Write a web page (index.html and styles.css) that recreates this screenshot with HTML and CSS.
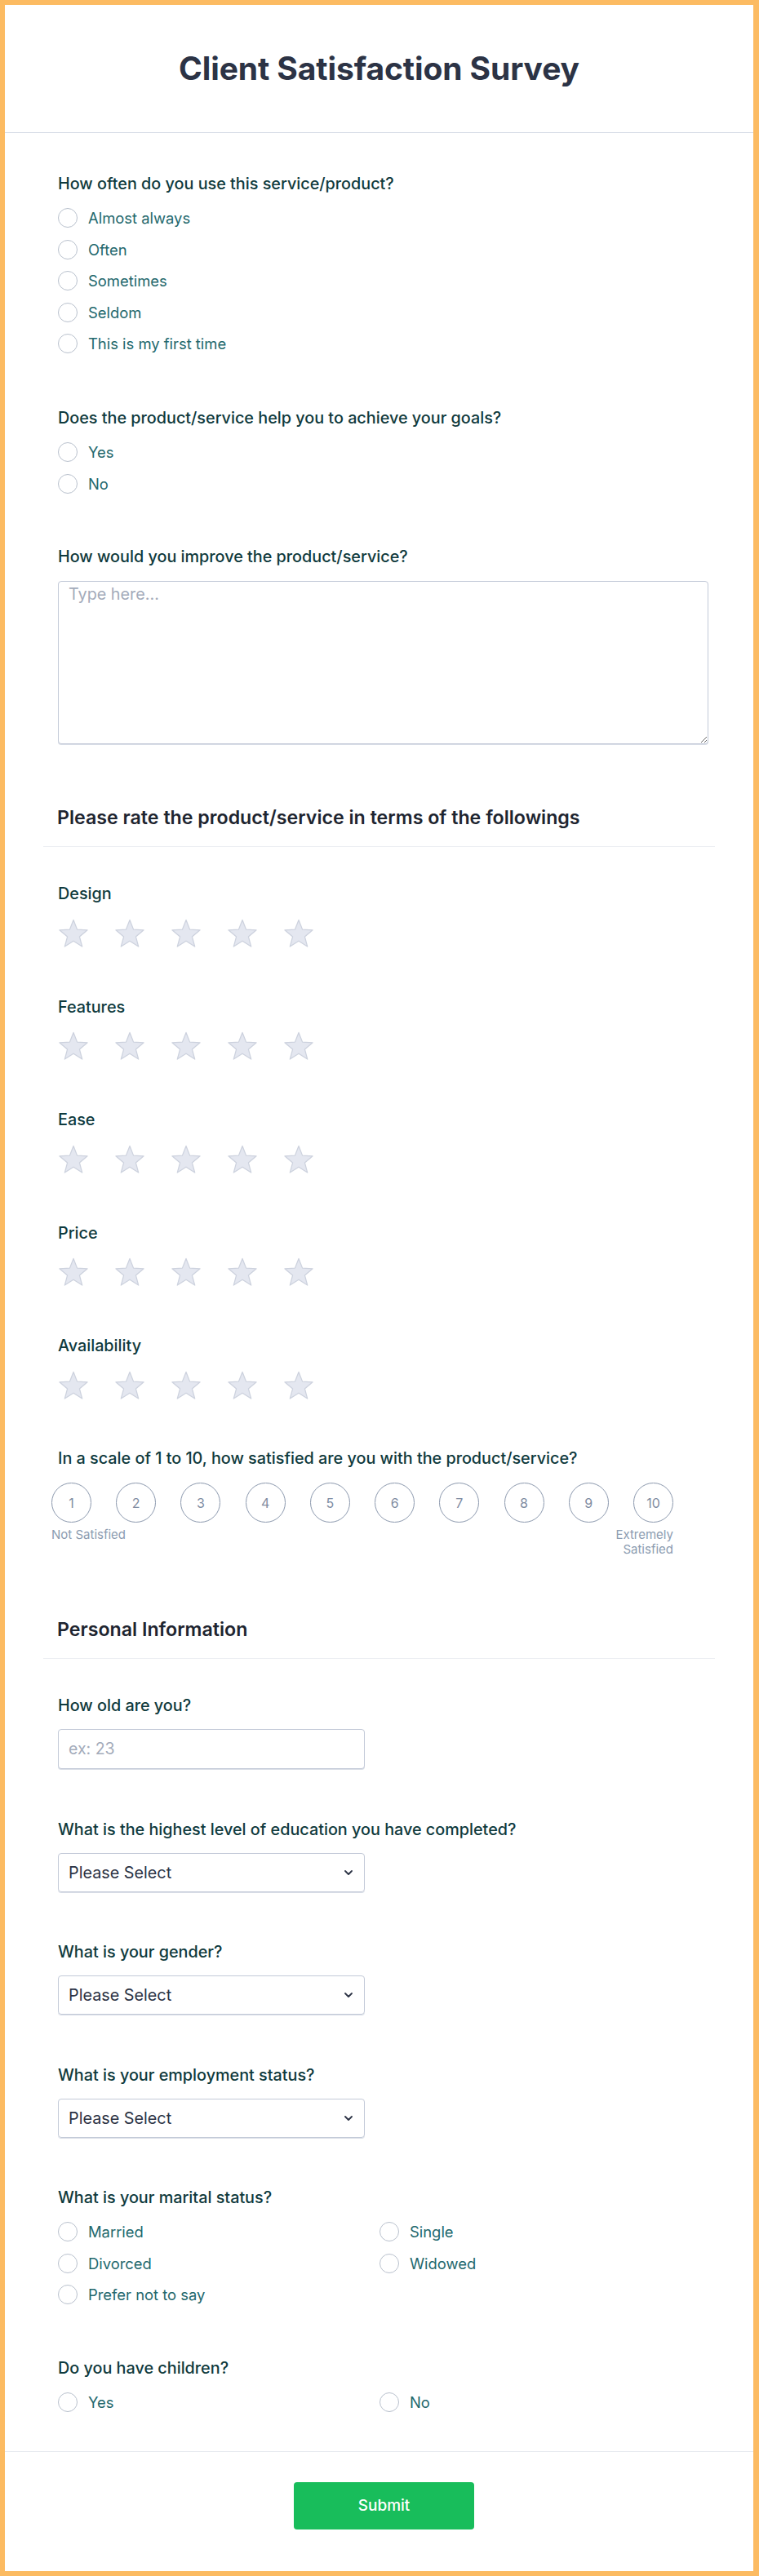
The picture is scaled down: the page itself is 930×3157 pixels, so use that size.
FILE: index.html
```html
<!DOCTYPE html>
<html lang="en">
<head>
<meta charset="utf-8">
<title>Client Satisfaction Survey</title>
<link rel="stylesheet" href="styles.css">
</head>
<body>
<div class="page">
  <header class="head"><h1 class="title">Client Satisfaction Survey</h1></header>
  <main class="body">
    <div class="q q1">
      <div class="label">How often do you use this service/product?</div>
      <div class="opts">
        <div class="opt"><span class="radio"></span>Almost always</div>
        <div class="opt"><span class="radio"></span>Often</div>
        <div class="opt"><span class="radio"></span>Sometimes</div>
        <div class="opt"><span class="radio"></span>Seldom</div>
        <div class="opt"><span class="radio"></span>This is my first time</div>
      </div>
    </div>
    <div class="q q2">
      <div class="label">Does the product/service help you to achieve your goals?</div>
      <div class="opts">
        <div class="opt"><span class="radio"></span>Yes</div>
        <div class="opt"><span class="radio"></span>No</div>
      </div>
    </div>
    <div class="q q3">
      <div class="label">How would you improve the product/service?</div>
      <textarea class="textarea" placeholder="Type here..."></textarea>
    </div>

    <div class="section s1">Please rate the product/service in terms of the followings</div>

    <div class="q rate r-first">
      <div class="label">Design</div>
      <div class="stars">
        <svg class="star" viewBox="0 0 39 37"><path d="M19.5 1.5L24.2 13.5 37.1 14.2 27.1 22.5 30.5 35 19.5 28 8.5 35 11.9 22.5 1.9 14.2 14.8 13.5Z"/></svg>
        <svg class="star" viewBox="0 0 39 37"><path d="M19.5 1.5L24.2 13.5 37.1 14.2 27.1 22.5 30.5 35 19.5 28 8.5 35 11.9 22.5 1.9 14.2 14.8 13.5Z"/></svg>
        <svg class="star" viewBox="0 0 39 37"><path d="M19.5 1.5L24.2 13.5 37.1 14.2 27.1 22.5 30.5 35 19.5 28 8.5 35 11.9 22.5 1.9 14.2 14.8 13.5Z"/></svg>
        <svg class="star" viewBox="0 0 39 37"><path d="M19.5 1.5L24.2 13.5 37.1 14.2 27.1 22.5 30.5 35 19.5 28 8.5 35 11.9 22.5 1.9 14.2 14.8 13.5Z"/></svg>
        <svg class="star" viewBox="0 0 39 37"><path d="M19.5 1.5L24.2 13.5 37.1 14.2 27.1 22.5 30.5 35 19.5 28 8.5 35 11.9 22.5 1.9 14.2 14.8 13.5Z"/></svg>
      </div>
    </div>
    <div class="q rate">
      <div class="label">Features</div>
      <div class="stars">
        <svg class="star" viewBox="0 0 39 37"><path d="M19.5 1.5L24.2 13.5 37.1 14.2 27.1 22.5 30.5 35 19.5 28 8.5 35 11.9 22.5 1.9 14.2 14.8 13.5Z"/></svg>
        <svg class="star" viewBox="0 0 39 37"><path d="M19.5 1.5L24.2 13.5 37.1 14.2 27.1 22.5 30.5 35 19.5 28 8.5 35 11.9 22.5 1.9 14.2 14.8 13.5Z"/></svg>
        <svg class="star" viewBox="0 0 39 37"><path d="M19.5 1.5L24.2 13.5 37.1 14.2 27.1 22.5 30.5 35 19.5 28 8.5 35 11.9 22.5 1.9 14.2 14.8 13.5Z"/></svg>
        <svg class="star" viewBox="0 0 39 37"><path d="M19.5 1.5L24.2 13.5 37.1 14.2 27.1 22.5 30.5 35 19.5 28 8.5 35 11.9 22.5 1.9 14.2 14.8 13.5Z"/></svg>
        <svg class="star" viewBox="0 0 39 37"><path d="M19.5 1.5L24.2 13.5 37.1 14.2 27.1 22.5 30.5 35 19.5 28 8.5 35 11.9 22.5 1.9 14.2 14.8 13.5Z"/></svg>
      </div>
    </div>
    <div class="q rate">
      <div class="label">Ease</div>
      <div class="stars">
        <svg class="star" viewBox="0 0 39 37"><path d="M19.5 1.5L24.2 13.5 37.1 14.2 27.1 22.5 30.5 35 19.5 28 8.5 35 11.9 22.5 1.9 14.2 14.8 13.5Z"/></svg>
        <svg class="star" viewBox="0 0 39 37"><path d="M19.5 1.5L24.2 13.5 37.1 14.2 27.1 22.5 30.5 35 19.5 28 8.5 35 11.9 22.5 1.9 14.2 14.8 13.5Z"/></svg>
        <svg class="star" viewBox="0 0 39 37"><path d="M19.5 1.5L24.2 13.5 37.1 14.2 27.1 22.5 30.5 35 19.5 28 8.5 35 11.9 22.5 1.9 14.2 14.8 13.5Z"/></svg>
        <svg class="star" viewBox="0 0 39 37"><path d="M19.5 1.5L24.2 13.5 37.1 14.2 27.1 22.5 30.5 35 19.5 28 8.5 35 11.9 22.5 1.9 14.2 14.8 13.5Z"/></svg>
        <svg class="star" viewBox="0 0 39 37"><path d="M19.5 1.5L24.2 13.5 37.1 14.2 27.1 22.5 30.5 35 19.5 28 8.5 35 11.9 22.5 1.9 14.2 14.8 13.5Z"/></svg>
      </div>
    </div>
    <div class="q rate">
      <div class="label">Price</div>
      <div class="stars">
        <svg class="star" viewBox="0 0 39 37"><path d="M19.5 1.5L24.2 13.5 37.1 14.2 27.1 22.5 30.5 35 19.5 28 8.5 35 11.9 22.5 1.9 14.2 14.8 13.5Z"/></svg>
        <svg class="star" viewBox="0 0 39 37"><path d="M19.5 1.5L24.2 13.5 37.1 14.2 27.1 22.5 30.5 35 19.5 28 8.5 35 11.9 22.5 1.9 14.2 14.8 13.5Z"/></svg>
        <svg class="star" viewBox="0 0 39 37"><path d="M19.5 1.5L24.2 13.5 37.1 14.2 27.1 22.5 30.5 35 19.5 28 8.5 35 11.9 22.5 1.9 14.2 14.8 13.5Z"/></svg>
        <svg class="star" viewBox="0 0 39 37"><path d="M19.5 1.5L24.2 13.5 37.1 14.2 27.1 22.5 30.5 35 19.5 28 8.5 35 11.9 22.5 1.9 14.2 14.8 13.5Z"/></svg>
        <svg class="star" viewBox="0 0 39 37"><path d="M19.5 1.5L24.2 13.5 37.1 14.2 27.1 22.5 30.5 35 19.5 28 8.5 35 11.9 22.5 1.9 14.2 14.8 13.5Z"/></svg>
      </div>
    </div>
    <div class="q rate">
      <div class="label">Availability</div>
      <div class="stars">
        <svg class="star" viewBox="0 0 39 37"><path d="M19.5 1.5L24.2 13.5 37.1 14.2 27.1 22.5 30.5 35 19.5 28 8.5 35 11.9 22.5 1.9 14.2 14.8 13.5Z"/></svg>
        <svg class="star" viewBox="0 0 39 37"><path d="M19.5 1.5L24.2 13.5 37.1 14.2 27.1 22.5 30.5 35 19.5 28 8.5 35 11.9 22.5 1.9 14.2 14.8 13.5Z"/></svg>
        <svg class="star" viewBox="0 0 39 37"><path d="M19.5 1.5L24.2 13.5 37.1 14.2 27.1 22.5 30.5 35 19.5 28 8.5 35 11.9 22.5 1.9 14.2 14.8 13.5Z"/></svg>
        <svg class="star" viewBox="0 0 39 37"><path d="M19.5 1.5L24.2 13.5 37.1 14.2 27.1 22.5 30.5 35 19.5 28 8.5 35 11.9 22.5 1.9 14.2 14.8 13.5Z"/></svg>
        <svg class="star" viewBox="0 0 39 37"><path d="M19.5 1.5L24.2 13.5 37.1 14.2 27.1 22.5 30.5 35 19.5 28 8.5 35 11.9 22.5 1.9 14.2 14.8 13.5Z"/></svg>
      </div>
    </div>

    <div class="q scale-q">
      <div class="label">In a scale of 1 to 10, how satisfied are you with the product/service?</div>
      <div class="scale">
        <div class="nums">
          <span class="num">1</span><span class="num">2</span><span class="num">3</span><span class="num">4</span><span class="num">5</span>
          <span class="num">6</span><span class="num">7</span><span class="num">8</span><span class="num">9</span><span class="num">10</span>
        </div>
        <div class="scale-labels">
          <span class="sl-left">Not Satisfied</span>
          <span class="sl-right">Extremely<br>Satisfied</span>
        </div>
      </div>
    </div>

    <div class="section s2">Personal Information</div>

    <div class="q age">
      <div class="label">How old are you?</div>
      <input class="input" type="text" placeholder="ex: 23">
    </div>
    <div class="q sel-q sel-first">
      <div class="label">What is the highest level of education you have completed?</div>
      <div class="select"><span>Please Select</span><svg class="chev" viewBox="0 0 10 6"><path d="M1 1l4 4 4-4"/></svg></div>
    </div>
    <div class="q sel-q">
      <div class="label">What is your gender?</div>
      <div class="select"><span>Please Select</span><svg class="chev" viewBox="0 0 10 6"><path d="M1 1l4 4 4-4"/></svg></div>
    </div>
    <div class="q sel-q">
      <div class="label">What is your employment status?</div>
      <div class="select"><span>Please Select</span><svg class="chev" viewBox="0 0 10 6"><path d="M1 1l4 4 4-4"/></svg></div>
    </div>
    <div class="q marital">
      <div class="label">What is your marital status?</div>
      <div class="opts two">
        <div class="opt"><span class="radio"></span>Married</div>
        <div class="opt"><span class="radio"></span>Single</div>
        <div class="opt"><span class="radio"></span>Divorced</div>
        <div class="opt"><span class="radio"></span>Widowed</div>
        <div class="opt"><span class="radio"></span>Prefer not to say</div>
      </div>
    </div>
    <div class="q children">
      <div class="label">Do you have children?</div>
      <div class="opts two">
        <div class="opt"><span class="radio"></span>Yes</div>
        <div class="opt"><span class="radio"></span>No</div>
      </div>
    </div>
  </main>
  <footer class="foot">
    <button class="submit" type="button">Submit</button>
  </footer>
</div>
</body>
</html>
```
FILE: styles.css
```css
* { box-sizing: border-box; }
html, body { margin: 0; padding: 0; background: #ffffff; }
body { font-family: Inter, "Noto Sans", "Liberation Sans", sans-serif; }

.page {
  width: 930px;
  height: 3157px;
  border: 6px solid #fcbb62;
  border-right-width: 7px;
  background: #ffffff;
  display: flex;
  flex-direction: column;
}

.head {
  height: 157px;
  border-bottom: 1px solid #d6dce6;
  display: flex;
  align-items: center;
  justify-content: center;
}
.title {
  margin: 0;
  font-size: 39px;
  font-weight: 700;
  color: #2c3345;
  letter-spacing: -0.1px;
  line-height: 46px;
}

.body {
  padding: 50px 47px 40px 47px;
}

.q { padding: 0 9px 0 18px; }
.label {
  font-size: 19.8px;
  font-weight: 500;
  line-height: 24px;
  color: #0f3a3d;
}

.q2 { margin-top: 59.5px; }
.q3 { margin-top: 58px; }

.opts { margin-top: 11px; }
.opt {
  height: 38.5px;
  display: flex;
  align-items: center;
  font-size: 18.4px;
  color: #23686d;
}
.radio {
  width: 24px;
  height: 24px;
  border: 1px solid #b9c1cd;
  border-radius: 50%;
  background: #fff;
  margin-right: 13px;
  flex: none;
}
.opts.two {
  display: grid;
  grid-template-columns: 394px 1fr;
}

.textarea {
  display: block;
  margin-top: 18px;
  width: 797px;
  height: 200px;
  border: 1px solid #c3cad8;
  border-radius: 4px;
  box-shadow: 0 1px 0 #d8dde6;
  padding: 3px 12px;
  font-family: inherit;
  font-size: 19.8px;
  line-height: 24px;
  color: #2c3345;
  background: #fff;
}
.textarea::placeholder { color: #a3abba; }

.section {
  font-size: 23.2px;
  font-weight: 600;
  line-height: 30px;
  color: #1e2530;
  padding: 0 17px 20px 17px;
  border-bottom: 1px solid #eceef2;
}
.s1 { margin-top: 75px; }
.s2 { margin-top: 74px; padding-bottom: 19.5px; }

.rate { margin-top: 61px; }
.rate.r-first { margin-top: 45px; }
.stars {
  margin-top: 19.5px;
  height: 34px;
  display: flex;
  gap: 31px;
  align-items: center;
}
.star {
  width: 38px;
  height: 36px;
  flex: none;
}
.star path {
  fill: #e4e7f0;
  stroke: #cdd2de;
  stroke-width: 1.3;
  stroke-linejoin: round;
}

.scale-q { margin-top: 60.5px; }
.scale {
  margin-top: 18px;
  margin-left: -8px;
  width: 762px;
}
.nums {
  display: flex;
  justify-content: space-between;
}
.num {
  width: 49px;
  height: 49px;
  border: 1.5px solid #8b98ad;
  border-radius: 50%;
  display: flex;
  align-items: center;
  justify-content: center;
  font-size: 16px;
  color: #7f8ca2;
}
.scale-labels {
  margin-top: 6px;
  display: flex;
  justify-content: space-between;
  font-size: 15px;
  line-height: 18px;
  color: #8c9cb1;
}
.sl-right { text-align: right; }

.age { margin-top: 45px; }
.input {
  display: block;
  margin-top: 17px;
  width: 376px;
  height: 49px;
  border: 1px solid #c3cad8;
  border-radius: 4px;
  box-shadow: 0 1px 0 #d8dde6;
  padding: 0 12px;
  font-family: inherit;
  font-size: 19.5px;
  color: #2c3345;
}
.input::placeholder { color: #a3abba; }

.sel-q { margin-top: 61.5px; }
.sel-q.sel-first { margin-top: 62px; }
.select {
  margin-top: 17px;
  width: 376px;
  height: 48px;
  border: 1px solid #c3cad8;
  border-radius: 4px;
  box-shadow: 0 1px 0 #d8dde6;
  padding: 0 14px 0 12px;
  display: flex;
  align-items: center;
  justify-content: space-between;
  font-size: 19.8px;
  color: #2c3345;
}
.chev {
  width: 10px;
  height: 6px;
}
.chev path {
  fill: none;
  stroke: #2c3345;
  stroke-width: 1.8;
  stroke-linecap: round;
  stroke-linejoin: round;
}

.marital { margin-top: 61.5px; }
.children { margin-top: 58.5px; }

.foot {
  border-top: 1px solid #e6e9ef;
  padding: 37px 0 0 12px;
  display: flex;
  justify-content: center;
  flex: 1;
}
.submit {
  width: 221px;
  height: 58px;
  border: none;
  border-radius: 4px;
  background: #18bd5b;
  color: #ffffff;
  font-family: inherit;
  font-size: 19px;
  font-weight: 500;
}
```
